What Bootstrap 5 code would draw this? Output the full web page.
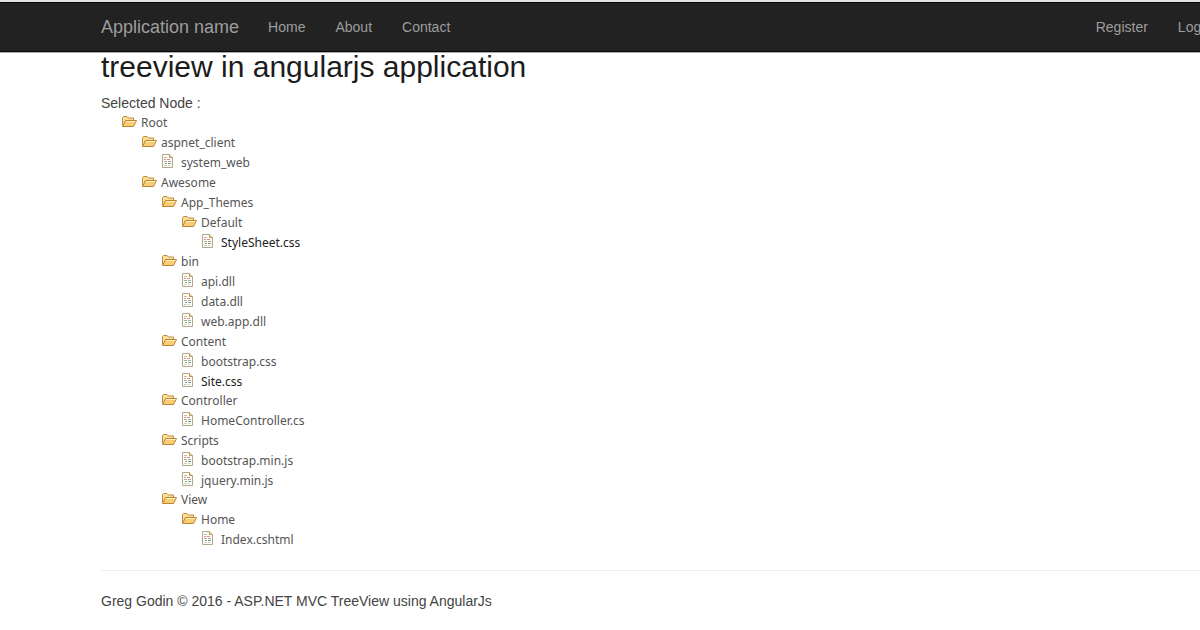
<!DOCTYPE html>
<html lang="en">
<head>
<meta charset="utf-8">
<meta name="viewport" content="width=device-width, initial-scale=1">
<title>treeview in angularjs application</title>
<link href="https://cdn.jsdelivr.net/npm/bootstrap@5.3.0/dist/css/bootstrap.min.css" rel="stylesheet">
<style>
body { font-family: "Liberation Sans", Arial, sans-serif; font-size: 14px; line-height: 20px; color: #444; background: #fff; overflow-x: hidden; }
.page-gutter { padding-left: 101px; }
.topbar { background: #222; border-top: 1px solid #080808; border-bottom: 1px solid #080808; margin-top: 2px; --bs-navbar-padding-y: 0px; --bs-navbar-nav-link-padding-x: 15px; box-shadow: 0 -2px #dfe3e3, 0 1px #aaa; }
.topbar .navbar-brand { font-size: 18px; line-height: 20px; color: #9d9d9d; padding: 14px 0; margin-right: 14px; }
.topbar .nav-link { color: #9d9d9d; line-height: 20px; padding-top: 14px; padding-bottom: 14px; }
.topbar .account-links { margin-right: -31px; }
.page-title { font-size: 30px; line-height: 30px; font-weight: 400; color: #1c1c1c; margin-bottom: 11px; }
.tree, .tree ul { list-style: none; margin: 0; padding-left: 20px; }
.tree { font-family: "Noto Sans", sans-serif; font-size: 12px; color: #555; }
.tree .node { display: flex; height: 20px; line-height: 20px; }
.tree .node svg { flex: none; width: 16px; height: 16px; margin-right: 4px; }
.tree .compact > li:nth-child(even) { margin-top: -1px; }
.tree .strong-node { color: #222; }
.page-rule { border-top: 1px solid #eee; margin: 20px 0; }
</style>
</head>
<body>
<svg class="d-none" aria-hidden="true">
  <symbol id="folder" viewBox="0 0 16 16">
    <path d="M1.500 12.500v-8l1-1h3.500l1.500 1.500h5v3" fill="#fbdf98" stroke="#c08a3c"/>
    <path d="M1.500 13.500L4.500 7.500h11l-3 6z" fill="#f9cd74" stroke="#bd8438"/>
    <path d="M5 8.500h9.500" stroke="#fff0bd"/>
  </symbol>
  <symbol id="file" viewBox="0 0 16 16">
    <path d="M1.500 1.500h7l3 3v10h-10z" fill="#fdfcf5" stroke="#b3a989"/>
    <path d="M8.500 1.500v3h3" fill="#f1dfa4" stroke="#b89c58"/>
    <path d="M3 4.500h3" stroke="#bbb"/>
    <path d="M3 6.500h2M6 6.500h3" stroke="#e08f8a"/>
    <path d="M3 8.500h3M7 8.500h3" stroke="#a8a8a8"/>
    <path d="M4 10.500h2M7 10.500h3" stroke="#78a790"/>
    <path d="M3 12.500h3M7 12.500h2" stroke="#ccc"/>
  </symbol>
</svg>

<nav class="navbar navbar-expand topbar page-gutter">
  <a class="navbar-brand" href="#">Application name</a>
  <ul class="navbar-nav">
    <li class="nav-item"><a class="nav-link" href="#">Home</a></li>
    <li class="nav-item"><a class="nav-link" href="#">About</a></li>
    <li class="nav-item"><a class="nav-link" href="#">Contact</a></li>
  </ul>
  <ul class="navbar-nav ms-auto account-links text-nowrap">
    <li class="nav-item"><a class="nav-link" href="#">Register</a></li>
    <li class="nav-item"><a class="nav-link" href="#">Log in</a></li>
  </ul>
</nav>

<main class="page-gutter">
  <h2 class="page-title">treeview in angularjs application</h2>
  <div>Selected Node :</div>
  <ul class="tree">
    <li><span class="node"><svg><use href="#folder"/></svg>Root</span>
      <ul>
        <li><span class="node"><svg><use href="#folder"/></svg>aspnet_client</span>
          <ul><li><span class="node"><svg><use href="#file"/></svg>system_web</span></li></ul>
        </li>
        <li><span class="node"><svg><use href="#folder"/></svg>Awesome</span>
          <ul class="compact">
            <li><span class="node"><svg><use href="#folder"/></svg>App_Themes</span>
              <ul><li><span class="node"><svg><use href="#folder"/></svg>Default</span>
                <ul><li><span class="node strong-node"><svg><use href="#file"/></svg>StyleSheet.css</span></li></ul>
              </li></ul>
            </li>
            <li><span class="node"><svg><use href="#folder"/></svg>bin</span>
              <ul>
                <li><span class="node"><svg><use href="#file"/></svg>api.dll</span></li>
                <li><span class="node"><svg><use href="#file"/></svg>data.dll</span></li>
                <li><span class="node"><svg><use href="#file"/></svg>web.app.dll</span></li>
              </ul>
            </li>
            <li><span class="node"><svg><use href="#folder"/></svg>Content</span>
              <ul>
                <li><span class="node"><svg><use href="#file"/></svg>bootstrap.css</span></li>
                <li><span class="node strong-node"><svg><use href="#file"/></svg>Site.css</span></li>
              </ul>
            </li>
            <li><span class="node"><svg><use href="#folder"/></svg>Controller</span>
              <ul><li><span class="node"><svg><use href="#file"/></svg>HomeController.cs</span></li></ul>
            </li>
            <li><span class="node"><svg><use href="#folder"/></svg>Scripts</span>
              <ul>
                <li><span class="node"><svg><use href="#file"/></svg>bootstrap.min.js</span></li>
                <li><span class="node"><svg><use href="#file"/></svg>jquery.min.js</span></li>
              </ul>
            </li>
            <li><span class="node"><svg><use href="#folder"/></svg>View</span>
              <ul><li><span class="node"><svg><use href="#folder"/></svg>Home</span>
                <ul><li><span class="node"><svg><use href="#file"/></svg>Index.cshtml</span></li></ul>
              </li></ul>
            </li>
          </ul>
        </li>
      </ul>
    </li>
  </ul>
  <div class="page-rule"></div>
  <footer>Greg Godin © 2016 - ASP.NET MVC TreeView using AngularJs</footer>
</main>
<script src="https://cdn.jsdelivr.net/npm/bootstrap@5.3.0/dist/js/bootstrap.bundle.min.js"></script>
</body>
</html>
